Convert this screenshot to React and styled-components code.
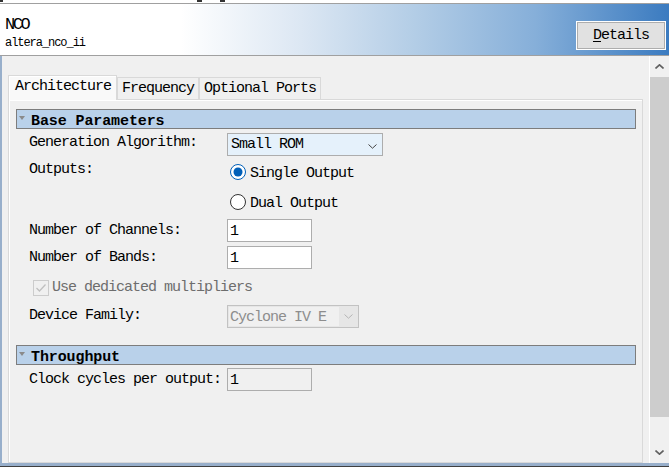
import React from 'react';
import styled, {createGlobalStyle} from 'styled-components';

const GlobalStyle = createGlobalStyle`
    html, body {
        margin: 0;
        padding: 0;
        background: #fff;
    }
    body {
        width: 669px;
        height: 472px;
        overflow: hidden;
        font-family: "Liberation Mono", "DejaVu Sans Mono", monospace;
        font-size: 15px;
        letter-spacing: -1px;
        color: #000;
    }
`

const Window = styled.div`
    width: 669px;
    height: 472px;
    display: flex;
    flex-direction: column;
    overflow: hidden;
    background: #fff;
`

const TopStrip = styled.div`
    flex: none;
    height: 3px;
    display: flex;
    align-items: flex-start;
    border-bottom: 1px solid #a0a0a0;
`

const Mark = styled.span`
    width: ${p => p.$w}px;
    height: ${p => p.$h}px;
    margin-left: ${p => p.$gap}px;
    background: #333;
`

const Header = styled.div`
    flex: none;
    height: 51px;
    display: flex;
    justify-content: space-between;
    align-items: flex-start;
    padding-left: 5px;
    border-bottom: 1px solid #a0a0a0;
    background: linear-gradient(to right, #fff 0%, #fff 27%, #dce7f3 45%, #b3cde6 62%, #86afd9 80%, #3b7bc0 100%);
`

const Titles = styled.div`
    display: flex;
    flex-direction: column;
    padding-top: 12px;
`

const Title = styled.span`
    font-size: 17px;
    line-height: 18px;
    letter-spacing: -2.4px;
`

const SubTitle = styled.span`
    margin-top: 2px;
    font-size: 12px;
    line-height: 14px;
    letter-spacing: -1.05px;
`

const DetailsButton = styled.div`
    width: 88px;
    height: 27px;
    box-sizing: border-box;
    margin: 18px 4px 0 0;
    display: flex;
    justify-content: center;
    align-items: center;
    border: 1px solid #adadad;
    box-shadow: 0 0 0 1px #fff;
    background: #e1e1e1;
    line-height: 16px;

    > u {
        text-underline-offset: 2px;
    }
`

const Body = styled.div`
    flex: none;
    height: 407px;
    display: flex;
    background: #f0f0f0;
    overflow: hidden;
`

const Main = styled.div`
    flex: 1;
    display: flex;
    flex-direction: column;
    padding: 19px 6px 0 6px;
    border-left: 2px solid #98afcb;
    overflow: hidden;
`

const TabRow = styled.div`
    flex: none;
    height: 24px;
    display: flex;
    align-items: flex-end;
`

const Tab = styled.div`
    box-sizing: border-box;
    height: ${p => p.$active ? 25 : 22}px;
    margin-bottom: ${p => p.$active ? -1 : 0}px;
    padding: ${p => p.$active ? '3px 5px 0 6px' : '3px 4px 0'};
    position: relative;
    z-index: ${p => p.$active ? 1 : 0};
    border: 1px solid #d9d9d9;
    border-bottom: none;
    background: ${p => p.$active ? '#f9f9f9' : '#f0f0f0'};
    box-shadow: ${p => p.$active ? 'inset 1px 1px 0 #fff' : 'none'};
    line-height: 16px;
    white-space: nowrap;
`

const Panel = styled.div`
    flex: 1;
    display: flex;
    flex-direction: column;
    padding: 9px 6px 0 7px;
    border: 1px solid #d9d9d9;
    box-shadow: inset 1px 1px 0 #fff;
    background: #f0f0f0;
`

const SectionHeader = styled.div`
    box-sizing: border-box;
    height: 20px;
    margin-top: ${p => p.$top}px;
    display: flex;
    align-items: flex-start;
    padding: 4px 0 0 2px;
    border: 1px solid #7d7d7d;
    background: #b9d1ea;
    font-weight: bold;
    font-size: 15px;
    letter-spacing: -0.1px;
    line-height: 16px;
`

const Triangle = styled.span`
    width: 0;
    height: 0;
    margin: 2px 6px 0 0;
    border-left: 3px solid transparent;
    border-right: 3px solid transparent;
    border-top: 4px solid #8a8a8a;
`

const Row = styled.div`
    display: flex;
    align-items: flex-start;
    margin-top: ${p => p.$top}px;
    padding-left: 13px;
`

const Label = styled.span`
    width: 198px;
    flex: none;
    margin-top: ${p => p.$off}px;
    line-height: 16px;
    white-space: nowrap;
`

const Select = styled.div`
    box-sizing: border-box;
    width: 156px;
    height: 23px;
    display: flex;
    align-items: flex-start;
    justify-content: space-between;
    padding: 3px 5px 0 3px;
    border: 1px solid #adadad;
    background: #e5f1fb;
    line-height: 16px;

    > svg {
        margin-top: 7px;
    }
`

const RadioGroup = styled.div`
    display: flex;
    flex-direction: column;
    margin-left: 3px;
`

const RadioOption = styled.div`
    height: 30px;
    display: flex;
    align-items: center;
    gap: 4px;
    line-height: 16px;

    > span {
        padding-top: 3px;
    }
`

const TextInput = styled.div`
    box-sizing: border-box;
    width: 85px;
    height: 23px;
    padding: 4px 2px 0;
    border: 1px solid #adadad;
    background: ${p => p.$readonly ? '#f0f0f0' : '#fff'};
    line-height: 16px;
`

const CheckRow = styled.div`
    display: flex;
    align-items: flex-start;
    gap: 3px;
    margin-top: 9px;
    padding-left: 17px;
    color: #6d6d6d;
    line-height: 16px;

    > span {
        margin-top: 2px;
    }
`

const CheckBox = styled.span`
    box-sizing: border-box;
    width: 16px;
    height: 16px;
    display: flex;
    border: 1px solid #cccccc;
    background: #f0f0f0;
`

const Combo = styled.div`
    box-sizing: border-box;
    width: 132px;
    height: 23px;
    display: flex;
    border: 1px solid #c2c2c2;
    background: #e6e6e6;
    color: #8d8d8d;
    line-height: 16px;
`

const ComboText = styled.span`
    flex: 1;
    margin: 1px 0 1px 1px;
    padding: 3px 0 0 1px;
    background: #f0f0f0;
`

const ComboArrow = styled.span`
    width: 19px;
    display: flex;
    justify-content: center;
    align-items: center;
`

const ScrollBar = styled.div`
    flex: none;
    width: 19px;
    display: flex;
    flex-direction: column;
    border-left: 1px solid #fff;
`

const ScrollButton = styled.div`
    flex: none;
    height: 21px;
    display: flex;
    justify-content: center;
    align-items: center;
`

const Thumb = styled.div`
    flex: none;
    height: 340px;
    background: #cdcdcd;
`

const Track = styled.div`
    flex: 1;
`

const BottomEdge = styled.div`
    flex: none;
    height: 3px;
    background: #98afcb;
    border-bottom: 1px solid #404040;
`

const Chevron = ({up, color = '#444', w = 9, h = 5, sw = 1}) => (
    <svg width={w} height={h} viewBox={`0 0 ${w} ${h}`}>
        <path
            d={up
                ? `M0.5 ${h - 0.5} L${w / 2} 0.8 L${w - 0.5} ${h - 0.5}`
                : `M0.5 0.5 L${w / 2} ${h - 0.8} L${w - 0.5} 0.5`}
            stroke={color} strokeWidth={sw} fill="none"/>
    </svg>
)

const Radio = ({checked}) => (
    <svg width="16" height="16" viewBox="0 0 16 16">
        <circle cx="8" cy="8" r="7.5" fill="#fff" stroke={checked ? '#005fb8' : '#333'} strokeWidth="1"/>
        {checked && <circle cx="8" cy="8" r="4.5" fill="#005fb8"/>}
    </svg>
)

export default function App() {
    return (
        <Window>
            <GlobalStyle/>
            <TopStrip>
                <Mark $gap={0} $w={3} $h={2}/>
                <Mark $gap={194} $w={5} $h={2}/>
                <Mark $gap={18} $w={5} $h={2}/>
            </TopStrip>
            <Header>
                <Titles>
                    <Title>NCO</Title>
                    <SubTitle>altera_nco_ii</SubTitle>
                </Titles>
                <DetailsButton><u>D</u>etails</DetailsButton>
            </Header>
            <Body>
                <Main>
                    <TabRow>
                        <Tab $active>Architecture</Tab>
                        <Tab>Frequency</Tab>
                        <Tab>Optional Ports</Tab>
                    </TabRow>
                    <Panel>
                        <SectionHeader $top={0}><Triangle/>Base Parameters</SectionHeader>
                        <Row $top={4}>
                            <Label $off={2}>Generation Algorithm:</Label>
                            <Select>Small ROM<Chevron/></Select>
                        </Row>
                        <Row $top={1}>
                            <Label $off={5}>Outputs:</Label>
                            <RadioGroup>
                                <RadioOption><Radio checked/><span>Single Output</span></RadioOption>
                                <RadioOption><Radio/><span>Dual Output</span></RadioOption>
                            </RadioGroup>
                        </Row>
                        <Row $top={2}>
                            <Label $off={4}>Number of Channels:</Label>
                            <TextInput>1</TextInput>
                        </Row>
                        <Row $top={4}>
                            <Label $off={4}>Number of Bands:</Label>
                            <TextInput>1</TextInput>
                        </Row>
                        <CheckRow>
                            <CheckBox>
                                <svg width="14" height="14" viewBox="0 0 14 14">
                                    <path d="M2.5 7 L5.5 10 L11.5 3.5" stroke="#c0c0c0" strokeWidth="1.3" fill="none"/>
                                </svg>
                            </CheckBox>
                            <span>Use dedicated multipliers</span>
                        </CheckRow>
                        <Row $top={9}>
                            <Label $off={3}>Device Family:</Label>
                            <Combo>
                                <ComboText>Cyclone IV E</ComboText>
                                <ComboArrow><Chevron color="#b5b5b5"/></ComboArrow>
                            </Combo>
                        </Row>
                        <SectionHeader $top={17}><Triangle/>Throughput</SectionHeader>
                        <Row $top={3}>
                            <Label $off={4}>Clock cycles per output:</Label>
                            <TextInput $readonly>1</TextInput>
                        </Row>
                    </Panel>
                </Main>
                <ScrollBar>
                    <ScrollButton><Chevron up color="#606060" sw={1.6}/></ScrollButton>
                    <Thumb/>
                    <Track/>
                    <ScrollButton><Chevron color="#606060" sw={1.6}/></ScrollButton>
                </ScrollBar>
            </Body>
            <BottomEdge/>
        </Window>
    );
}
